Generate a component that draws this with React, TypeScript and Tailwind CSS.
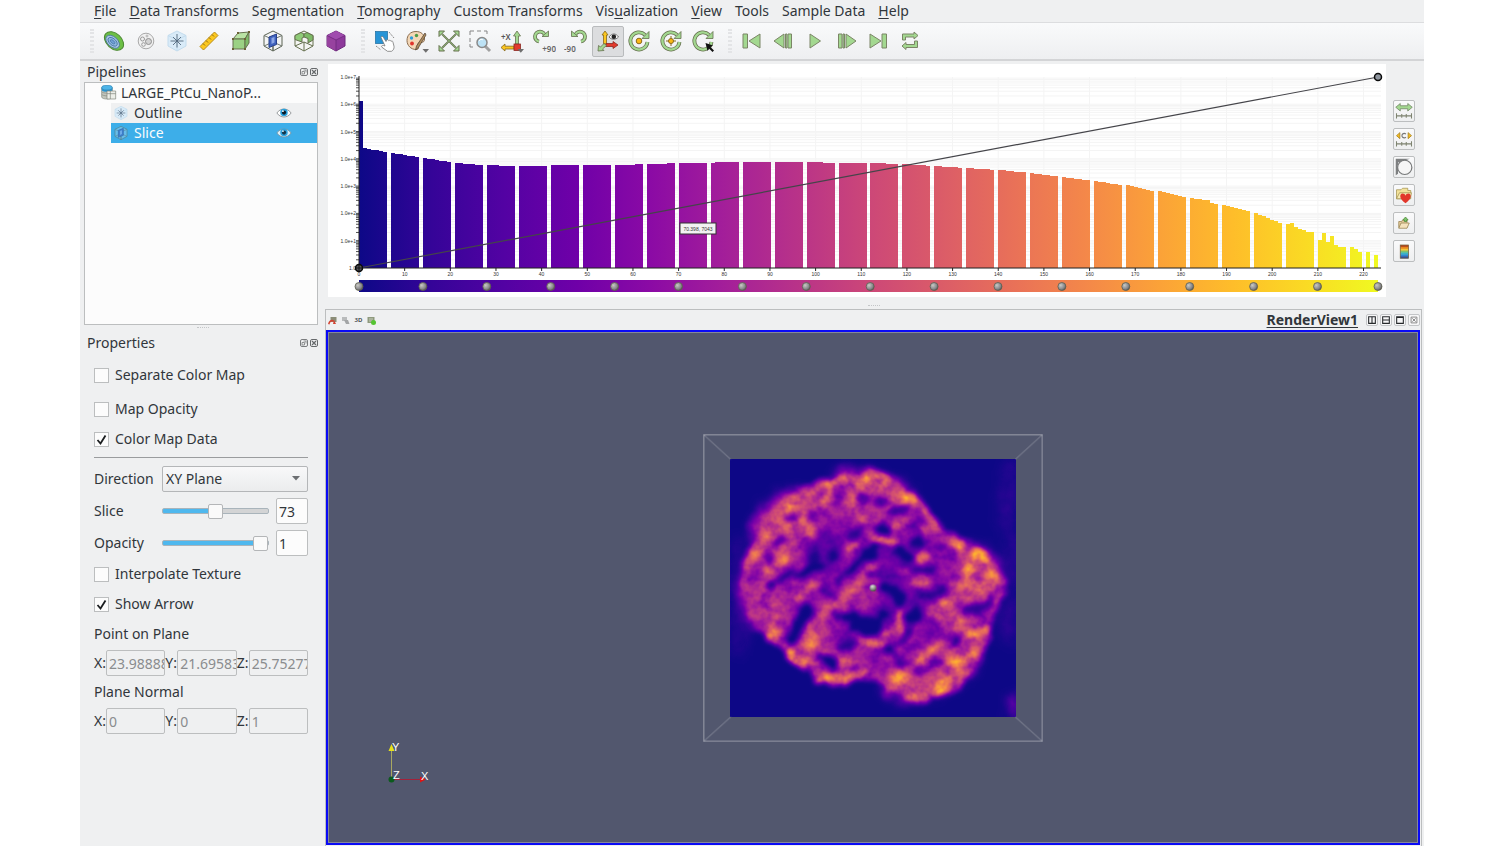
import clsx from "clsx";
import { useState, type ReactNode } from "react";

const PLASMA = [
  "#0d0887", "#350498", "#5302a3", "#6f00a8", "#8b0aa5",
  "#a31e9a", "#b83289", "#cc4778", "#db5c68", "#e97158",
  "#f48849", "#fba238", "#febd2a", "#fada24", "#f0f921",
];

function channelTable(offset: number) {
  return PLASMA.map((hex) =>
    (parseInt(hex.slice(offset, offset + 2), 16) / 255).toFixed(3),
  ).join(" ");
}

const GREEN = "#a3d890";
const EDGE = "#66704f";

/* ---------- toolbar icons, all on a 24x24 grid ---------- */

function Icon({ children, className }: { children: ReactNode; className?: string }) {
  return (
    <svg
      viewBox="0 0 24 24"
      className={clsx("shrink-0", className ?? "h-6 w-6")}
      fill="none"
      aria-hidden="true"
    >
      {children}
    </svg>
  );
}

const cubeOutline = "M12 2 21 6.500V17L12 22 3 17V6.500Z";

const ContourIcon = () => (
  <Icon>
    <g transform="rotate(42 12 12)">
      <ellipse cx="12" cy="12" rx="11" ry="7.500" fill="#6cbf45" stroke="#4d8a35" />
      <ellipse cx="11.500" cy="13.500" rx="8" ry="5" fill="#a9c8e6" stroke="#47709e" strokeWidth=".8" />
      <ellipse cx="11.500" cy="13.500" rx="5.500" ry="3.200" fill="#8fb9e2" stroke="#3d6a9c" strokeWidth=".8" />
      <ellipse cx="11.500" cy="13.500" rx="2.800" ry="1.400" fill="#6f9fd6" stroke="#3d6a9c" strokeWidth=".6" />
    </g>
  </Icon>
);

const GlyphIcon = () => (
  <Icon>
    <circle cx="12" cy="12" r="7.800" fill="#f1f1f1" stroke="#a9a9a9" />
    <circle cx="8.500" cy="10" r="2" stroke="#9a9a9a" />
    <circle cx="14.500" cy="12.500" r="3" fill="#d2d2d2" stroke="#8f8f8f" />
    <circle cx="9.500" cy="15.500" r="1.800" stroke="#9a9a9a" />
    <circle cx="13" cy="7" r="1" stroke="#b0b0b0" />
  </Icon>
);

const OutlineIcon = ({ className }: { className?: string }) => (
  <Icon className={className}>
    <path d={cubeOutline} fill="#d9ebf8" stroke="#c3dcee" />
    <path d="M3 6.500 12 11 21 6.500M12 11V22" stroke="#c3dcee" />
    <path d="M12 5V18.500M5.500 12H18.500M8 8 16 16M16 8 8 16" stroke="#50677c" strokeWidth=".9" />
  </Icon>
);

const RulerIcon = () => (
  <Icon>
    <path d="M3 17.500 17.500 3 21 6.500 6.500 21Z" fill="#fcc81e" stroke="#b98c1a" />
    <path d="M6 14.500 8 16.500M9 11.500 11 13.500M12 8.500 14 10.500M15 5.500 17 7.500" stroke="#8b6914" />
  </Icon>
);

const BoxIcon = () => (
  <Icon>
    <path d="M4 10 9 4 20 3 16 10Z" fill="#b9e3a4" stroke={EDGE} />
    <path d="M4 10H16V20H4Z" fill="#9bd184" stroke={EDGE} />
    <path d="M16 10 20 3V14L16 20Z" fill="#7dba67" stroke={EDGE} />
    <path d="M3 9h2v2H3zM15 9h2v2h-2zM3 19h2v2H3zM15 19h2v2h-2zM19 2h2v2h-2zM8 3h2v2H8z" fill="#6b6236" />
  </Icon>
);

const SliceIcon = ({ className }: { className?: string }) => (
  <Icon className={className}>
    <path d={cubeOutline} fill="#f3f4f2" fillOpacity=".4" stroke="#5b6353" />
    <path d="M3 6.500 12 10.500 21 6.500M12 10.500V22M3 17 12 13 21 17" stroke="#737b72" />
    <path d="M8 8 15.500 5V15.500L8 18.500Z" fill="#4063bd" stroke="#27408b" />
    <path d="M10.500 9 13.500 8V13.500L10.500 15Z" fill="#8ea8e6" />
    <path d="M12 17V22" stroke="#5b6353" />
  </Icon>
);

const ThresholdIcon = () => (
  <Icon>
    <path d={cubeOutline} fill="#f5f6f3" stroke={EDGE} />
    <path d="M3 17 12 13 21 17M12 13V22" stroke={EDGE} />
    <path d="M3 6.500 9 3.500 12 5V8L10 9V13L3 10.500Z" fill="#8fcb78" stroke={EDGE} />
    <path d="M12 5 15 3.500 21 6.500V11L16 14V9.500L12 8Z" fill="#7dba67" stroke={EDGE} />
  </Icon>
);

const VolumeIcon = () => (
  <Icon>
    <path d={cubeOutline} fill="#8d399b" stroke="#6d2a7c" />
    <path d="M3 6.500 12 2 21 6.500 12 11Z" fill="#a04cae" />
    <path d="M3 6.500 12 11V22L3 17Z" fill="#97429f" />
    <path d="M3 6.500 12 11 21 6.500M12 11V22" stroke="#6d2a7c" strokeWidth=".8" />
  </Icon>
);

const InteractIcon = () => (
  <Icon>
    <rect x="2.500" y="2.500" width="12" height="12" fill="#2794d6" stroke="#1b6c9f" strokeWidth=".7" />
    <path d="M16 3 21 9M3 17 8 21" stroke="#888" strokeDasharray="2 1" />
    <path
      d="M8 8.500c0-1.500 2-1.500 2.500 0l2.500 4 .5-1.500c1-.8 2 0 2.300.7.800-.8 2-.3 2.200.6 1-.6 2 0 2 1l1 4c.3 2-.5 4-2.500 5h-4l-5.500-4c-1-1 0-2.200 1.500-1.800l1.500.5Z"
      fill="#fff"
      stroke="#777"
      strokeWidth=".8"
    />
  </Icon>
);

const PaletteIcon = () => (
  <Icon>
    <path
      d="M11 2.500C5 2.500 2 6.500 2 11.500S6 20.500 11 20.500c3 0 3-2 2-3.500-1-2 0-3.500 2.500-3.500 3 0 4-1 4-3.500C19.500 5.500 16 2.500 11 2.500Z"
      fill="#f4d7b6"
      stroke="#8b6d4f"
    />
    <circle cx="6.500" cy="9" r="1.700" fill="#2d9ddd" />
    <circle cx="11.500" cy="6.500" r="1.700" fill="#4e9b47" />
    <circle cx="7" cy="14.500" r="1.900" fill="#e0342c" />
    <path d="M20 4 11.500 17l-1 4 3-2.500L21 6Z" fill="#b08d5c" stroke="#55483a" strokeWidth=".8" />
    <path d="M17.500 20h6.500l-3.200 3.700Z" fill="#6e6e6e" />
  </Icon>
);

const ResetIcon = () => (
  <Icon>
    <path d="M5 5 19 19M19 5 5 19" stroke={EDGE} strokeWidth="1.800" />
    <path d="M5 5 19 19M19 5 5 19" stroke={GREEN} strokeWidth=".5" />
    <g fill={GREEN} stroke={EDGE}>
      <path d="M2 2h5.500L2 7.500ZM22 2v5.500L16.500 2ZM2 22v-5.500L7.500 22ZM22 22h-5.500l5.500-5.500Z" />
    </g>
  </Icon>
);

const ZoomBoxIcon = () => (
  <Icon>
    <path d="M2 6V2h4M9 2h4M16 2h3v3M2 9v4M2 15v3h3" stroke="#858585" />
    <path d="M17 17 22 22" stroke="#a0a0a0" strokeWidth="3" />
    <circle cx="14" cy="13.500" r="5" fill="#bde2f5" stroke="#8a8a8a" strokeWidth="1.500" />
    <path d="M11 12c1-2 3-2 4-1" stroke="#fff" />
  </Icon>
);

const AxisXIcon = () => (
  <Icon>
    <text x="1" y="11" className="fill-[#555] font-['Noto_Sans'] text-[8px] font-semibold">+X</text>
    <path d="M17 2 20.500 7H18.500V15H15.500V7H13.500Z" fill={GREEN} stroke={EDGE} strokeWidth=".8" />
    <path d="M1 18.500 5 15v2.200H14v2.800H5V22Z" fill="#fbc620" stroke="#87671b" strokeWidth=".8" />
    <rect x="14" y="15" width="6.500" height="6.500" fill="#e23a2d" stroke="#8b2a22" strokeWidth=".8" />
    <path d="M17.500 20h6.500l-3.200 3.700Z" fill="#6e6e6e" />
  </Icon>
);

const Rot90Icon = ({ label, flip }: { label: string; flip?: boolean }) => (
  <Icon>
    <g transform={flip ? "translate(24 0) scale(-1 1)" : undefined}>
      <path d="M7 12.500A5 5 0 1 1 13 7" stroke={EDGE} strokeWidth="3.800" />
      <path d="M7 12.500A5 5 0 1 1 13 7" stroke={GREEN} strokeWidth="2.200" />
      <path d="M10 7.500h6.500v-5.500Z" fill={GREEN} stroke={EDGE} strokeWidth=".8" />
    </g>
    <text
      x={flip ? 0 : 24}
      y="22.500"
      textAnchor={flip ? "start" : "end"}
      className="fill-[#666] font-['Noto_Sans'] text-[8px] font-semibold"
    >
      {label}
    </text>
  </Icon>
);

const AxesEyeIcon = () => (
  <Icon>
    <path d="M9 2 12 6H10.500V15H7.500V6H6Z" fill="#fbc620" stroke="#87671b" strokeWidth=".8" />
    <path d="M10 14.500H17V12.500L22 16 17 19.500V17.500H10Z" fill="#e23a2d" stroke="#8b2a22" strokeWidth=".8" />
    <path d="M8 14.500 10.500 16.500 6.500 20 8 21.500 2 22 2.500 16.500 4.500 18Z" fill={GREEN} stroke={EDGE} strokeWidth=".8" />
    <path d="M13 8c3-4 7-4 9.500 0-3 3-7 3-9.500 0Z" fill="#fff" stroke="#555" strokeWidth=".8" />
    <circle cx="17.800" cy="7.800" r="2.300" fill="#222" />
  </Icon>
);

const RotateIcon = ({ children }: { children?: ReactNode }) => (
  <Icon>
    <path d="M20.500 13A8.600 8.600 0 1 1 18 5.800" stroke={EDGE} strokeWidth="3.800" />
    <path d="M20.500 13A8.600 8.600 0 1 1 18 5.800" stroke={GREEN} strokeWidth="2.200" />
    <path d="M22 2.500V9.500H15Z" fill={GREEN} stroke={EDGE} strokeWidth=".8" />
    {children}
  </Icon>
);

const PlayIcon = ({ d }: { d: string }) => (
  <Icon>
    <path d={d} fill={GREEN} stroke="#7b8566" />
  </Icon>
);

const sceneTools: [string, ReactNode][] = [
  ["Contour", <ContourIcon />],
  ["Glyph", <GlyphIcon />],
  ["Outline", <OutlineIcon />],
  ["Ruler", <RulerIcon />],
  ["Scale cube", <BoxIcon />],
  ["Slice", <SliceIcon />],
  ["Threshold", <ThresholdIcon />],
  ["Volume", <VolumeIcon />],
];

const cameraTools: [string, ReactNode][] = [
  ["Interact", <InteractIcon />],
  ["Palette", <PaletteIcon />],
  ["Reset camera", <ResetIcon />],
  ["Zoom to box", <ZoomBoxIcon />],
  ["View direction", <AxisXIcon />],
  ["Rotate clockwise", <Rot90Icon label="+90" />],
  ["Rotate counter-clockwise", <Rot90Icon label="-90" flip />],
  ["Show orientation axes", <AxesEyeIcon />],
  [
    "Show center of rotation",
    <RotateIcon><circle cx="12" cy="12" r="2.800" fill="#fbb916" stroke="#8c6a1c" /></RotateIcon>,
  ],
  [
    "Reset center of rotation",
    <RotateIcon>
      <path d="M12 7v10M7 12h10" stroke="#8c6a1c" />
      <circle cx="12" cy="12" r="2.500" fill="#fbb916" stroke="#8c6a1c" />
    </RotateIcon>,
  ],
  [
    "Pick center of rotation",
    <RotateIcon>
      <path d="M14.500 14 22 16.500 19.500 18 23 21.500 21.500 23 18 19.500 16.500 22Z" fill="#111" />
    </RotateIcon>,
  ],
];

const playTools: [string, ReactNode][] = [
  ["First frame", <PlayIcon d="M3 5H7.500V19H3ZM20 5V19L9 12Z" />],
  ["Previous frame", <PlayIcon d="M13 5V19L3 12ZM14.500 5H16V19H14.500ZM17 5H20.500V19H17Z" />],
  ["Play", <PlayIcon d="M7 5V19L17.500 12Z" />],
  ["Next frame", <PlayIcon d="M3.500 5H7V19H3.500ZM8 5H9.500V19H8ZM11 5V19L21 12Z" />],
  ["Last frame", <PlayIcon d="M4 5V19L15 12ZM16 5H20.500V19H16Z" />],
  [
    "Loop",
    <PlayIcon d="M4.500 11V5H16V3L20 6.500 16 10V8H7.500V11ZM19.500 12V18.500H8V20.500L4 17 8 13.500V15.500H16.500V12Z" />,
  ],
];

function Grip() {
  return <div className="mx-1 h-6 w-1 border-x-2 border-dotted border-[#e3e4e6]" />;
}

function ToolGroup({
  tools,
  className,
}: {
  tools: [string, ReactNode][];
  className: string;
}) {
  return (
    <div className={clsx("grid", className)}>
      {tools.map(([label, icon]) => (
        <button
          key={label}
          aria-label={label}
          className={clsx(
            "flex h-[31px] items-center justify-center rounded-xs border",
            label === "Show orientation axes"
              ? "border-[#b9bbbd] bg-[#dcdddf]"
              : "border-transparent",
          )}
        >
          {icon}
        </button>
      ))}
    </div>
  );
}

/* ---------- menu bar ---------- */

// [before, mnemonic, after]
const menus: [string, string, string][] = [
  ["", "F", "ile"],
  ["", "D", "ata Transforms"],
  ["Segmentation", "", ""],
  ["", "T", "omography"],
  ["Custom Transforms", "", ""],
  ["Vis", "u", "alization"],
  ["", "V", "iew"],
  ["Tools", "", ""],
  ["Sample Data", "", ""],
  ["", "H", "elp"],
];

function MenuBar() {
  return (
    <nav className="flex h-[22px] items-center gap-[13px] px-[14px]">
      {menus.map(([before, key, after]) => (
        <button key={before + key + after} className="whitespace-nowrap">
          {before}
          {key && <span className="underline underline-offset-2">{key}</span>}
          {after}
        </button>
      ))}
    </nav>
  );
}

/* ---------- left side ---------- */

function DockTitle({ children }: { children: string }) {
  return (
    <div className="flex h-[21px] items-center pr-[7px] pl-[7px]">
      <h2 className="flex-1">{children}</h2>
      <button aria-label={`Float ${children}`} className="mr-[2px]">
        <svg viewBox="0 0 8 8" className="h-2 w-2" fill="none" stroke="#7a7c7e">
          <rect x=".5" y=".5" width="7" height="7" rx="1.500" />
          <path d="M3.500 2H6V4.500M2 3.500H4.500V6H2Z" strokeWidth=".8" />
        </svg>
      </button>
      <button aria-label={`Close ${children}`}>
        <svg viewBox="0 0 8 8" className="h-2 w-2" fill="none" stroke="#66696b">
          <rect x=".5" y=".5" width="7" height="7" rx="1.500" />
          <path d="M2 2 6 6M6 2 2 6" strokeWidth="1.200" />
        </svg>
      </button>
    </div>
  );
}

function EyeIcon() {
  return (
    <svg viewBox="0 0 18 12" className="h-3 w-4" aria-hidden="true">
      <path d="M1 6C5 0 13 0 17 6 13 12 5 12 1 6Z" fill="#fff" stroke="#8b8f92" />
      <circle cx="9" cy="5.500" r="4.200" fill="#2ba2de" />
      <circle cx="9" cy="5.500" r="2.400" fill="#0c1a26" />
      <circle cx="7.800" cy="4" r="1" fill="#fff" />
    </svg>
  );
}

function DatabaseIcon() {
  return (
    <Icon className="h-4 w-4">
      <path d="M1 4V18C1 22 17 22 17 18V4Z" fill="#c3c6bd" stroke="#858a80" />
      <path d="M1 10C3 13 15 13 17 10M1 14C3 17 15 17 17 14" stroke="#83887e" />
      <path d="M1 4V8C3 11 15 11 17 8V4Z" fill="#2a94d0" />
      <ellipse cx="9" cy="4" rx="8" ry="3.500" fill="#4db4e8" stroke="#2a84b5" />
      <path d="M9 9H22V21H9Z" fill="#eceee8" stroke="#7e8379" />
      <path d="M9 13H22M14 9V21" stroke="#7e8379" />
    </Icon>
  );
}

function PipelineTree() {
  return (
    <ul className="mr-[7px] ml-1 h-[243px] border border-[#bcbebf] bg-[#fcfcfc]">
      <li className="flex h-5 items-center gap-1 pl-4">
        <DatabaseIcon />
        <span>LARGE_PtCu_NanoP...</span>
      </li>
      <li className="ml-[26px] flex h-5 items-center bg-[#eff0f1] pr-[25px] pl-[2px]">
        <OutlineIcon className="mr-[5px] h-4 w-4" />
        <span className="flex-1">Outline</span>
        <button aria-label="Toggle Outline"><EyeIcon /></button>
      </li>
      <li className="ml-[26px] flex h-5 items-center bg-[#3daee9] pr-[25px] pl-[2px] text-[#fcfcfc]">
        <SliceIcon className="mr-[5px] h-4 w-4 opacity-60" />
        <span className="flex-1">Slice</span>
        <button aria-label="Toggle Slice" className="opacity-80"><EyeIcon /></button>
      </li>
    </ul>
  );
}

function CheckRow({ label, initial }: { label: string; initial?: boolean }) {
  const [checked, setChecked] = useState(!!initial);

  return (
    <label className="flex h-5 items-center gap-[6px]">
      <span className="relative h-[15px] w-[15px]">
        <input
          type="checkbox"
          checked={checked}
          onChange={() => setChecked(!checked)}
          className="block h-[15px] w-[15px] appearance-none border border-[#bcbebf] bg-[#fcfcfc]"
        />
        {checked && (
          <svg viewBox="0 0 15 15" className="pointer-events-none absolute inset-0" fill="none">
            <path d="M3.500 8 6.500 11.500 11.500 3.500" stroke="#1b1e20" strokeWidth="1.800" />
          </svg>
        )}
      </span>
      {label}
    </label>
  );
}

function SliderRow({
  label,
  max,
  initial,
}: {
  label: string;
  max: number;
  initial: number;
}) {
  const [value, setValue] = useState(initial);
  const fill = Math.round((value / max) * 95);

  return (
    <div className="flex h-[26px] items-center">
      <label htmlFor={label} className="w-[68px]">{label}</label>
      <input
        id={label}
        type="range"
        min={0}
        max={max}
        value={value}
        onChange={(e) => setValue(Number(e.target.value))}
        className="h-[6px] min-w-0 flex-1 appearance-none rounded-xs border border-[#a9b4bb] [&::-webkit-slider-thumb]:h-[15px] [&::-webkit-slider-thumb]:w-[15px] [&::-webkit-slider-thumb]:appearance-none [&::-webkit-slider-thumb]:rounded-xs [&::-webkit-slider-thumb]:border [&::-webkit-slider-thumb]:border-[#b4b6b8] [&::-webkit-slider-thumb]:bg-[#fafafa]"
        style={{
          background: `linear-gradient(to right, #4fb8ee ${fill}%, #d3d4d5 ${fill}%)`,
        }}
      />
      <input
        aria-label={`${label} value`}
        value={value}
        onChange={(e) => setValue(Number(e.target.value) || 0)}
        className="ml-[7px] h-[26px] w-8 rounded-xs border border-[#bcbebf] bg-[#fcfcfc] px-[2px]"
      />
    </div>
  );
}

function VectorRow({ name, values }: { name: string; values: string[] }) {
  return (
    <div className="grid grid-cols-3">
      {["X", "Y", "Z"].map((axis, i) => (
        <label key={axis} className="flex items-center">
          <span className="w-3 whitespace-nowrap">{axis}:</span>
          <input
            disabled
            aria-label={`${name} ${axis}`}
            defaultValue={values[i]}
            className="h-[26px] min-w-0 flex-1 rounded-xs border border-[#bcbebf] pl-[2px] text-[#8a8c8e]"
          />
        </label>
      ))}
    </div>
  );
}

function Properties() {
  return (
    <form className="mt-3 mr-[17px] ml-[14px]">
      <CheckRow label="Separate Color Map" />
      <div className="mt-[14px] mb-[10px]">
        <CheckRow label="Map Opacity" />
      </div>
      <CheckRow label="Color Map Data" initial />
      <hr className="my-2 border-[#9a9c9e]" />
      <div className="mb-2 space-y-[6px]">
        <div className="flex h-[26px] items-center">
          <label htmlFor="direction" className="w-[68px]">Direction</label>
          <div className="relative flex-1">
            <select
              id="direction"
              className="block h-[26px] w-full appearance-none rounded-xs border border-[#b4b6b8] bg-linear-to-b from-[#f8f8f9] to-[#ebeced] px-[3px]"
            >
              <option>XY Plane</option>
              <option>YZ Plane</option>
              <option>XZ Plane</option>
            </select>
            <svg viewBox="0 0 8 5" className="pointer-events-none absolute top-[10px] right-2 h-[5px] w-2">
              <path d="M0 0H8L4 4.500Z" fill="#6c6f72" />
            </svg>
          </div>
        </div>
        <SliderRow label="Slice" max={146} initial={73} />
        <SliderRow label="Opacity" max={1} initial={1} />
      </div>
      <CheckRow label="Interpolate Texture" />
      <div className="my-[10px]">
        <CheckRow label="Show Arrow" initial />
      </div>
      <h3 className="mb-[6px] h-5">Point on Plane</h3>
      <VectorRow
        name="Point on Plane"
        values={["23.98888889", "21.69583333", "25.75277778"]}
      />
      <h3 className="my-[6px] h-5">Plane Normal</h3>
      <VectorRow name="Plane Normal" values={["0", "0", "1"]} />
    </form>
  );
}

/* ---------- histogram ---------- */

const BINS = 255;
const X0 = 31;
const X1 = 1050;
const BASE = 204;
const DECADE = 27.3;

// [bin, bar height]
const profile: [number, number][] = [
  [0, 167], [1, 120], [6, 116], [8, 115], [14, 111], [16, 110], [22, 106],
  [24, 105], [30, 103], [40, 102], [55, 103], [64, 103], [80, 105], [96, 106],
  [112, 106], [120, 105], [128, 105], [136, 104], [144, 102], [152, 100],
  [160, 98], [168, 95], [176, 91], [182, 88], [184, 87], [190, 83], [192, 83],
  [198, 77], [200, 77], [206, 71], [208, 70], [212, 68], [213, 65], [214, 64],
  [216, 63], [222, 57], [224, 55], [230, 45], [232, 44], [233, 45], [234, 41],
  [236, 38], [237, 36], [238, 36], [240, 28], [241, 35], [242, 26], [243, 32],
  [244, 23], [245, 21], [248, 21], [249, 19], [250, 16], [252, 16], [254, 13],
];

function barHeight(bin: number) {
  const next = profile.findIndex(([b]) => b >= bin);
  if (next < 0) return 0;
  const [b1, h1] = profile[next];
  if (b1 === bin) return h1;
  const [b0, h0] = profile[next - 1];
  return h0 + ((h1 - h0) * (bin - b0)) / (b1 - b0);
}

const bins = Array.from({ length: BINS }, (_, i) => i).filter(
  (i) => i % 8 !== 7 && i !== 251 && i !== 253,
);

const minorLines = Array.from({ length: 7 }, (_, d) =>
  [1, 2, 3, 4, 5, 6, 7, 8, 9].map((m) => BASE - (d + Math.log10(m)) * DECADE),
).flat();

const valueX = (v: number) => X0 + v * 4.566;

function Histogram() {
  const binWidth = (X1 - X0) / BINS;
  const tickText = "fill-[#333] font-['Liberation_Sans'] text-[5px]";

  return (
    <svg viewBox="0 0 1058 233" className="block min-w-0 flex-1 bg-white" role="img" aria-label="Histogram">
      <defs>
        <linearGradient id="plasma" gradientUnits="userSpaceOnUse" x1={X0} x2={X1}>
          {PLASMA.map((c, i) => (
            <stop key={c} offset={i / (PLASMA.length - 1)} stopColor={c} />
          ))}
        </linearGradient>
        <radialGradient id="knob" cx=".35" cy=".35" r=".7">
          <stop offset="0" stopColor="#c9c9c4" />
          <stop offset=".7" stopColor="#85858a" />
          <stop offset="1" stopColor="#55554a" />
        </radialGradient>
      </defs>

      <g stroke="#f4f4f4">
        {minorLines.map((y) => (
          <path key={y} d={`M${X0} ${y}H1053`} />
        ))}
        {Array.from({ length: 22 }, (_, i) => (
          <path key={i} d={`M${valueX((i + 1) * 10)} 13V${BASE}`} />
        ))}
      </g>

      <g fill="url(#plasma)" shapeRendering="crispEdges">
        {bins.map((i) => (
          <rect
            key={i}
            x={X0 + i * binWidth}
            y={BASE - barHeight(i)}
            width={binWidth}
            height={barHeight(i)}
          />
        ))}
      </g>

      <path d={`M${X0} 12V${BASE}H1053`} fill="none" stroke="#222" />
      <g stroke="#222" strokeWidth=".8">
        {minorLines.map((y) => (
          <path key={y} d={`M28 ${y}H${X0}`} />
        ))}
      </g>
      {Array.from({ length: 8 }, (_, i) => (
        <text key={i} x="28" y={BASE + 2 - i * DECADE} textAnchor="end" className={tickText}>
          {i === 0 ? "1.0" : `1.0e+${i}`}
        </text>
      ))}
      {Array.from({ length: 23 }, (_, i) => (
        <g key={i}>
          <path d={`M${valueX(i * 10)} ${BASE}v3`} stroke="#222" />
          <text x={valueX(i * 10)} y="212" textAnchor="middle" className={tickText}>
            {i * 10}
          </text>
        </g>
      ))}

      <rect x={X0} y="216" width={X1 - X0} height="12" fill="url(#plasma)" />
      {Array.from({ length: 17 }, (_, i) => (
        <circle
          key={i}
          cx={i === 16 ? X1 : X0 + i * 63.9}
          cy="222.500"
          r="4"
          fill="url(#knob)"
          stroke="#5f5f50"
          strokeWidth=".8"
        />
      ))}

      <path d={`M${X0} ${BASE}L${X1} 13`} stroke="#45454a" strokeWidth="1.200" />
      <circle cx={X0} cy={BASE} r="3.500" fill="#55555c" stroke="#0a0a0a" strokeWidth="1.500" />
      <path d={`M${X0} 200v8M27 ${BASE}h8`} stroke="#0a0a0a" strokeWidth=".8" />
      <circle cx={X1} cy="13" r="3.500" fill="#8e959e" stroke="#0a0a0a" strokeWidth="1.500" />

      <rect x="352" y="159" width="36" height="11" fill="#f2f2f2" stroke="#333" />
      <text x="370" y="167" textAnchor="middle" className={tickText}>70.398, 7043</text>
    </svg>
  );
}

function Range({ children }: { children: ReactNode }) {
  return (
    <Icon className="h-[18px] w-[18px]">
      <path d="M2 15V22M22 15V22M2 18.500H22M9 16V21M15 16V21" stroke="#7e8370" strokeWidth="1.400" />
      {children}
    </Icon>
  );
}

const rainbow = ["#b5461d", "#e8871e", "#f2c63a", "#7cc36c", "#38b4c4", "#2a8ad0", "#2b4f9e"];

const colorTools: [string, ReactNode][] = [
  [
    "Rescale to data",
    <Range><path d="M1 7 7 2V5H17V2L23 7 17 12V9H7V12Z" fill={GREEN} stroke="#6d8060" /></Range>,
  ],
  [
    "Rescale to custom range",
    <Range>
      <path d="M6.500 3.500V11.500L2 7.500ZM17.500 3.500V11.500L22 7.500Z" fill="#f5bd20" stroke="#a07b1c" />
      <path d="M14.500 5.500A3 3 0 1 0 14.500 9.500" stroke="#777" strokeWidth="1.500" />
    </Range>,
  ],
  [
    "Invert color map",
    <Icon className="h-[18px] w-[18px]">
      <path d="M1 1H20L4 6V21L1 23Z" fill="#7d7f80" />
      <circle cx="13" cy="12.500" r="9.500" fill="#f6f6f6" stroke="#77797a" strokeWidth="1.600" />
    </Icon>,
  ],
  [
    "Choose preset",
    <Icon className="h-[18px] w-[18px]">
      <path d="M2 5H8L10 3H17V6H21V17H2Z" fill="#f3e29a" stroke="#a39350" />
      <path d="M2 17 6 9H22L20 17Z" fill="#f7ebb4" stroke="#a39350" />
      <path d="M14 23C5 17 6 10 10 10 12 10 13.500 11 14 13 14.500 11 16 10 18 10 22 10 23 17 14 23Z" fill="#e2372b" />
    </Icon>,
  ],
  [
    "Load preset",
    <Icon className="h-[18px] w-[18px]">
      <path d="M5 10H9L10 8H16V18H5Z" fill="#e5cc9c" stroke="#96804f" />
      <path d="M5 19 8 12H19L16 19Z" fill="#f4e2bd" stroke="#96804f" />
      <path d="M14 4 17.500 8H15.500V10H12.500V8H10.500Z" fill="#7cc36c" stroke="#4d8a35" />
    </Icon>,
  ],
  [
    "Color legend",
    <Icon className="h-[18px] w-[18px]">
      {rainbow.map((c, i) => (
        <rect key={c} x="7" y={4 + i * 2.5} width="11" height="3" fill={c} />
      ))}
      <rect x="7" y="4" width="11" height="17.500" stroke="#77603a" />
    </Icon>,
  ],
];

/* ---------- render view ---------- */

const body =
  "M510 124 545 130 575 145 610 175 655 210 690 255 740 300 790 335 830 355 855 370 868 395 905 425 917 460 912 490 885 515 890 545 870 600 850 660 815 720 780 770 735 790 690 808 640 812 600 790 565 770 530 750 490 742 440 755 395 765 350 735 300 700 260 670 240 645 205 620 170 580 150 540 130 490 122 430 135 390 170 330 205 270 250 215 300 185 350 155 400 148 430 138 465 135Z";

// cx, cy, rx, ry, angle, density (0..255)
const regions: number[][] = [
  [260, 280, 110, 80, -40, 150], [520, 180, 120, 45, 15, 150], [820, 430, 70, 80, 10, 150],
  [690, 730, 140, 60, -20, 150], [190, 500, 60, 90, 0, 120], [480, 480, 110, 40, -30, 120],
  [370, 640, 80, 60, 20, 130], [760, 570, 80, 60, -20, 130], [370, 360, 70, 70, 20, 55],
  [600, 400, 90, 70, 0, 65], [700, 620, 60, 40, 0, 85], [620, 530, 110, 60, 0, 65],
  [440, 620, 50, 30, 0, 70], [720, 420, 60, 50, 0, 80],
];

const grains: number[][] = [
  [415, 195, 15, 36, 8, 85], [470, 690, 50, 20, 0, 100],
  // bright spots
  [495, 148, 34, 16, 0, 235], [545, 150, 32, 22, 20, 200], [405, 158, 34, 11, -12, 215],
  [340, 180, 30, 10, -30, 180], [285, 217, 32, 13, -30, 215], [235, 250, 24, 10, -55, 180],
  [185, 340, 13, 60, 30, 195], [145, 400, 10, 30, 15, 165], [620, 203, 38, 12, 32, 200],
  [670, 240, 30, 8, 50, 170], [705, 280, 40, 8, 42, 175], [765, 342, 30, 13, 28, 195],
  [835, 377, 30, 20, 20, 225], [855, 478, 34, 13, 0, 220], [808, 425, 22, 38, 0, 200],
  [885, 440, 20, 28, 0, 185], [842, 605, 34, 16, -22, 220], [225, 612, 26, 20, 40, 215],
  [290, 685, 32, 17, 25, 245], [335, 712, 24, 9, 30, 190], [400, 745, 52, 12, -4, 210],
  [470, 730, 40, 8, -5, 175], [520, 640, 44, 14, 12, 200], [725, 768, 36, 20, -35, 230],
  [790, 682, 44, 16, -28, 215], [770, 730, 20, 20, 0, 190], [645, 790, 44, 14, 12, 210],
  [590, 740, 20, 34, -30, 200], [560, 332, 32, 9, 0, 195], [605, 275, 26, 11, -30, 185],
  [665, 380, 24, 15, 0, 170], [660, 457, 30, 10, 0, 190], [745, 515, 28, 13, -15, 200],
  [800, 508, 20, 8, 0, 170], [600, 570, 16, 28, 0, 180], [440, 695, 26, 13, -10, 195],
  [690, 665, 60, 9, -34, 190], [330, 625, 20, 30, 35, 190], [240, 392, 32, 14, -10, 180],
  [210, 422, 20, 11, 10, 170], [322, 285, 18, 34, -20, 170], [240, 290, 30, 18, -40, 170],
  [310, 485, 44, 9, -30, 170], [205, 530, 38, 10, -42, 175], [235, 560, 40, 8, -50, 160],
  [460, 350, 20, 7, -45, 170], [445, 490, 70, 12, -38, 155], [500, 268, 46, 8, 25, 175],
  [460, 225, 16, 36, 20, 160], [380, 210, 20, 30, 20, 165], [775, 580, 11, 32, 0, 180],
  [705, 555, 28, 18, 30, 165], [565, 605, 22, 9, -20, 160], [825, 655, 12, 28, 20, 205],
  [380, 600, 26, 10, 20, 155], [365, 555, 12, 34, 20, 150], [680, 300, 16, 10, 0, 150],
  [610, 425, 16, 10, 0, 150], [510, 412, 18, 8, -20, 150], [730, 395, 12, 14, 0, 140],
  // pores
  [510, 366, 40, 22, -34, 0], [468, 405, 46, 15, -48, 0], [425, 445, 32, 9, -45, 15],
  [550, 293, 30, 17, 0, 0], [595, 243, 36, 16, -14, 25], [540, 216, 22, 13, 0, 30],
  [486, 203, 20, 14, 0, 45], [275, 262, 24, 17, 0, 65], [338, 255, 15, 11, 0, 65],
  [245, 333, 24, 13, -10, 35], [200, 382, 16, 18, 0, 60], [405, 376, 20, 17, 0, 5],
  [462, 308, 14, 30, 42, 20], [345, 385, 18, 24, 10, 10], [330, 420, 56, 16, -20, 0],
  [250, 440, 36, 11, -34, 5], [215, 467, 16, 15, 0, 0], [318, 548, 24, 34, 12, 0],
  [290, 600, 54, 18, -58, 0], [565, 470, 32, 22, 0, 0], [592, 500, 30, 32, 0, 0],
  [500, 585, 50, 26, 0, 0], [545, 550, 26, 24, 0, 0], [455, 560, 34, 18, 10, 0],
  [410, 555, 26, 12, 0, 20], [645, 555, 24, 26, 0, 0], [700, 490, 50, 15, -15, 15],
  [665, 422, 32, 13, 0, 5], [600, 360, 26, 16, 0, 0], [618, 375, 18, 22, 0, 0],
  [655, 335, 22, 16, 0, 5], [645, 280, 28, 11, -45, 55], [717, 348, 20, 12, 0, 40],
  [838, 528, 54, 13, -24, 20], [766, 632, 18, 18, 0, 5], [385, 690, 40, 18, 30, 0],
  [437, 650, 32, 18, -20, 15], [612, 618, 36, 12, -55, 15], [575, 664, 18, 14, 0, 0],
  [710, 698, 20, 16, 0, 55], [665, 720, 28, 13, 0, 60], [800, 480, 14, 9, 0, 75],
  [832, 445, 20, 9, 20, 105], [525, 432, 24, 8, -10, 30], [385, 490, 34, 12, 40, 40],
  [605, 690, 34, 11, 30, 40], [640, 778, 12, 7, 0, 120],
];

const haze: number[][] = [
  [925, 190, 30, 120, 8, 14], [942, 390, 26, 90, 0, 18], [930, 570, 35, 70, 0, 16],
  [115, 430, 22, 110, 0, 18], [115, 600, 30, 80, 0, 12], [955, 835, 28, 50, 0, 60],
  [135, 500, 22, 80, 0, 40],
];

function Blobs({ items }: { items: number[][] }) {
  return (
    <>
      {items.map(([cx, cy, rx, ry, angle, v], i) => (
        <ellipse
          key={i}
          cx={cx}
          cy={cy}
          rx={rx}
          ry={ry}
          transform={`rotate(${angle} ${cx} ${cy})`}
          fill={`rgb(${v},${v},${v})`}
        />
      ))}
    </>
  );
}

function SliceVolume() {
  return (
    <svg viewBox="9 11 1020 924" className="h-[308px] w-[340px]" role="img" aria-label="Slice">
      <defs>
        <filter id="soft" x="-20%" y="-20%" width="140%" height="140%" colorInterpolationFilters="sRGB">
          <feGaussianBlur stdDeviation="16" />
        </filter>
        <filter
          id="colormap"
          filterUnits="userSpaceOnUse"
          x="92"
          y="87"
          width="854"
          height="773"
          colorInterpolationFilters="sRGB"
        >
          <feTurbulence type="fractalNoise" baseFrequency=".022" numOctaves="3" seed="7" result="raw" />
          <feColorMatrix in="raw" values="1 0 0 0 0  1 0 0 0 0  1 0 0 0 0  0 0 0 0 1" result="noise" />
          <feDisplacementMap
            in="SourceGraphic"
            in2="raw"
            scale="36"
            xChannelSelector="G"
            yChannelSelector="B"
          />
          <feGaussianBlur stdDeviation="8" result="density" />
          <feComposite in="density" in2="noise" operator="arithmetic" k1=".9" k2=".36" />
          <feColorMatrix values="1 0 0 0 0  0 1 0 0 0  0 0 1 0 0  0 0 0 0 1" />
          <feComponentTransfer>
            <feFuncR type="table" tableValues={channelTable(1)} />
            <feFuncG type="table" tableValues={channelTable(3)} />
            <feFuncB type="table" tableValues={channelTable(5)} />
          </feComponentTransfer>
        </filter>
        <radialGradient id="ball" cx=".4" cy=".25" r=".8">
          <stop offset="0" stopColor="#e4e6e2" />
          <stop offset=".6" stopColor="#85897f" />
          <stop offset="1" stopColor="#3d4038" />
        </radialGradient>
      </defs>

      <g filter="url(#colormap)">
        <rect x="0" y="0" width="1040" height="960" fill="#000" />
        <g filter="url(#soft)">
          <Blobs items={haze} />
        </g>
        <path d={body} fill="#626262" stroke="#808080" strokeWidth="10" />
        <g filter="url(#soft)">
          <Blobs items={regions} />
        </g>
        <Blobs items={grains} />
      </g>

      <g fill="none" stroke="#a4a7b3" strokeWidth="3">
        <rect x="11" y="13" width="1016" height="920" />
        <path d="M11 13 92 87M1027 13 946 87M11 933 92 860M1027 933 946 860" strokeWidth="2" />
      </g>
      <circle cx="519" cy="473" r="10" fill="url(#ball)" />
    </svg>
  );
}

function OrientationAxes() {
  const letter = "fill-white font-['Liberation_Sans'] text-[11px]";

  return (
    <svg viewBox="0 0 50 50" className="absolute bottom-[54px] left-[55px] h-[50px] w-[50px]">
      <path d="M8.500 40V10" stroke="#a9a860" />
      <path d="M9 40.500H39" stroke="#a3213a" />
      <path d="M8.500 5 11.500 12H5.500Z" fill="#e6e01a" />
      <path d="M43 40.500 37 37.500V43.500Z" fill="#e01414" />
      <circle cx="8.500" cy="40.500" r="3" fill="#0b5a1c" />
      <text x="9" y="12" className={letter}>Y</text>
      <text x="10" y="40" className={letter}>Z</text>
      <text x="38" y="41" className={letter}>X</text>
    </svg>
  );
}

const windowButtons: [string, ReactNode][] = [
  ["Split horizontal", <path d="M2 2H10V10H2ZM6 2V10" strokeWidth="1.300" />],
  ["Split vertical", <path d="M2 2H10V10H2ZM2 6H10" strokeWidth="1.300" />],
  ["Maximize", <path d="M2 2H10V10H2ZM2 3H10" strokeWidth="1.300" />],
  ["Close view", <path d="M2.500 2.500H9.500V9.500H2.500ZM4 4 8 8M8 4 4 8" stroke="#777" />],
];

function RenderHeader() {
  return (
    <div className="flex h-5 items-center gap-1 pr-px pl-[2px]">
      <button aria-label="Undo camera">
        <svg viewBox="0 0 9 9" className="h-[9px] w-[9px]">
          <rect x="2.500" y="1" width="6" height="5" fill="#8b8d78" />
          <path d="M0 8C1 4 4 3 6 4.500L5 6C3.500 5 2 6 1.500 8.500ZM6 4 8 8 5 8Z" fill="#d2402f" />
        </svg>
      </button>
      <button aria-label="Redo camera">
        <svg viewBox="0 0 9 9" className="h-[9px] w-[9px]">
          <path d="M1 1H6V5H1Z" fill="#b9bbbc" />
          <path d="M3 4H7L8.500 8H5Z" fill="#a3a5a6" />
        </svg>
      </button>
      <button className="w-[9px] text-center text-[6px] font-semibold">3D</button>
      <button aria-label="Capture view">
        <svg viewBox="0 0 9 9" className="h-[9px] w-[9px]">
          <rect x=".5" y="1" width="7" height="6" fill="#8f9a7e" />
          <path d="M2 3H6M2 5H5" stroke="#d5dccb" strokeWidth=".8" />
          <circle cx="6.500" cy="6.500" r="2.500" fill="#55c432" />
        </svg>
      </button>
      <strong className="ml-auto font-bold underline underline-offset-2">RenderView1</strong>
      <div className="ml-1 flex gap-[2px]">
        {windowButtons.map(([label, glyph]) => (
          <button key={label} aria-label={label} className="rounded-xs border border-[#c3c5c7] bg-[#f7f7f8]">
            <svg viewBox="0 0 12 12" className="h-[10px] w-[10px]" fill="none" stroke="#26292b">
              {glyph}
            </svg>
          </button>
        ))}
      </div>
    </div>
  );
}

export default function App() {
  return (
    <div className="flex h-screen justify-center bg-white font-['Noto_Sans',sans-serif] text-[14px] leading-5 text-[#31363b]">
      <div className="mx-20 flex min-w-0 flex-1 flex-col overflow-hidden bg-[#eff0f1]">
        <MenuBar />
        <div className="flex h-[39px] items-center border-t border-b-2 border-t-[#dcdddf] border-b-[#d3d4d6] bg-linear-to-b from-[#f9fafb] to-[#eeeff1] pl-[6px]">
          <Grip />
          <ToolGroup tools={sceneTools} className="w-[254px] grid-cols-8" />
          <div className="w-[5px]" />
          <Grip />
          <ToolGroup tools={cameraTools} className="w-[350px] grid-cols-11" />
          <div className="w-[5px]" />
          <Grip />
          <ToolGroup tools={playTools} className="w-[190px] grid-cols-6" />
        </div>

        <div className="flex min-h-0 flex-1">
          <aside className="w-[245px] shrink-0">
            <DockTitle>Pipelines</DockTitle>
            <PipelineTree />
            <div className="mx-auto mt-[2px] mb-1 w-3 border-t border-dotted border-[#c4c6c8]" />
            <DockTitle>Properties</DockTitle>
            <Properties />
          </aside>

          <main className="flex min-w-0 flex-1 flex-col pt-[3px] pr-[2px]">
            <div className="flex items-start pr-[7px] pl-[3px]">
              <Histogram />
              <div className="mt-9 ml-[7px] flex flex-col gap-[6px]">
                {colorTools.map(([label, icon]) => (
                  <button
                    key={label}
                    aria-label={label}
                    className="flex h-[22px] w-[22px] items-center justify-center rounded-xs border border-[#bcbebf] bg-linear-to-b from-[#fafafb] to-[#eeeff0]"
                  >
                    {icon}
                  </button>
                ))}
              </div>
            </div>
            <div className="mx-auto mt-2 mb-[3px] w-3 border-t border-dotted border-[#c4c6c8]" />
            <section className="flex min-h-0 flex-1 flex-col border border-b-0 border-[#bcbebf]">
              <RenderHeader />
              <div className="relative mr-px mb-px flex min-h-0 flex-1 items-center justify-center border-2 border-[#0a0af5] bg-[#52576e] inset-ring inset-ring-[#85889a]">
                <SliceVolume />
                <OrientationAxes />
              </div>
            </section>
          </main>
        </div>
      </div>
    </div>
  );
}
